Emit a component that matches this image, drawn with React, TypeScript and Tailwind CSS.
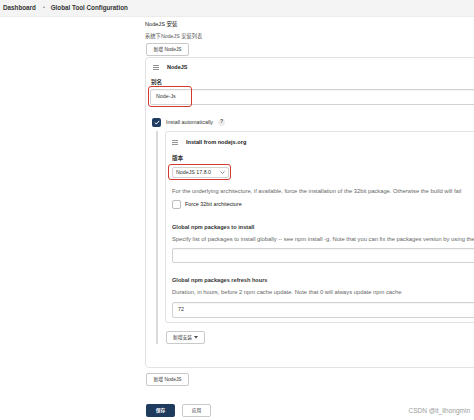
import type { ReactNode } from "react";

const font = "font-['Liberation_Sans','Noto_Sans_CJK_SC',sans-serif]";

function DragHandle() {
  return (
    <svg width="6" height="5" viewBox="0 0 6 5" className="shrink-0">
      <rect x="0" y="0" width="6" height="0.9" fill="#8a8a8a" />
      <rect x="0" y="2" width="6" height="0.9" fill="#8a8a8a" />
      <rect x="0" y="4" width="6" height="0.9" fill="#8a8a8a" />
    </svg>
  );
}

function SmallButton({ children, className = "" }: { children: ReactNode; className?: string }) {
  return (
    <div
      className={`flex h-[13px] items-center justify-center gap-[2px] rounded-[2px] border border-[#c9c9c9] bg-white text-[4.8px] text-[#333] ${className}`}
    >
      {children}
    </div>
  );
}

function Label({ children, className = "" }: { children: ReactNode; className?: string }) {
  return <div className={`h-[8px] text-[5.6px] leading-[8px] font-bold text-[#333] ${className}`}>{children}</div>;
}

function Desc({ children, className = "" }: { children: ReactNode; className?: string }) {
  return <div className={`h-[8px] whitespace-nowrap text-[5.8px] leading-[8px] text-[#666] ${className}`}>{children}</div>;
}

function TextInput({ value, className = "" }: { value?: string; className?: string }) {
  return (
    <div
      className={`flex items-center rounded-[2px] border border-[#d2d2d2] bg-white pl-[5px] text-[5.3px] text-[#333] shadow-[inset_0_1px_1px_rgba(0,0,0,0.04)] ${className}`}
    >
      {value}
    </div>
  );
}

export default function App() {
  return (
    <div className={`relative h-[420px] w-[474px] overflow-hidden bg-white ${font}`}>
      {/* breadcrumb bar */}
      <div className="flex h-[17px] items-center border-b border-[#ececec] bg-[#f4f4f4] pl-[3px] text-[6.3px] font-bold text-[#333]">
        <span>Dashboard</span>
        <span className="ml-[7px] mr-[6px] text-[5px] font-normal text-[#777]">•</span>
        <span>Global Tool Configuration</span>
      </div>

      <div className="flex w-[600px] flex-col pl-[145px] pt-[3px]">
        <div className="h-[8px] text-[5.6px] leading-[8px] text-[#222]">NodeJS 安装</div>
        <div className="mt-[4px] h-[8px] text-[5.3px] leading-[8px] text-[#555]">系统下NodeJS 安装列表</div>
        <SmallButton className="ml-[1px] mt-[3px] w-[43px]">新增 NodeJS</SmallButton>

        {/* installation card */}
        <div className="mt-[1px] flex flex-col rounded-[4px] border border-[#e2e2e2] pb-[22px] pl-[4px] pt-[4px]">
          <div className="flex h-[10px] items-center">
            <div className="ml-[3px]">
              <DragHandle />
            </div>
            <span className="ml-[8px] text-[5.5px] font-bold text-[#222]">NodeJS</span>
          </div>
          <Label className="ml-[1px] mt-[6px]">别名</Label>
          <div className="relative mt-[3px]">
            <TextInput value="Node-Js" className="h-[16px]" />
            <div className="absolute left-[-2px] top-[-3px] h-[21px] w-[44px] rounded-[3px] border-[1.5px] border-[#d33a2f]" />
          </div>

          <div className="mt-[13px] flex h-[9px] items-center">
            <div className="ml-[2px] flex h-[9px] w-[9px] items-center justify-center rounded-[2px] bg-[#1f3b5f]">
              <svg width="6" height="5" viewBox="0 0 6 5">
                <path d="M0.8 2.6 L2.3 4 L5.2 0.9" stroke="white" strokeWidth="1" fill="none" />
              </svg>
            </div>
            <span className="ml-[5px] text-[5.4px] text-[#333]">Install automatically</span>
            <span className="ml-[5px] flex h-[7px] w-[7px] items-center justify-center rounded-full bg-[#ececec] text-[4.5px] font-bold text-[#444]">
              ?
            </span>
          </div>

          {/* nested installers */}
          <div className="mt-[4px] flex pb-[1px]">
            <div className="ml-[6px] w-[2px] bg-[#d9d9d9]" />
            <div className="ml-[7px] flex flex-1 flex-col">
              <div className="flex flex-col rounded-[3px] border border-[#e2e2e2] pb-[4px] pl-[6px] pt-[5px]">
                <div className="flex h-[10px] items-center">
                  <DragHandle />
                  <span className="ml-[8px] text-[5.6px] font-bold text-[#222]">Install from nodejs.org</span>
                </div>
                <Label className="mt-[7px]">版本</Label>
                <div className="relative mt-[5px] w-[57px]">
                  <div className="flex h-[11px] items-center justify-between rounded-[2px] border border-[#d2d2d2] bg-white pl-[3px] pr-[3px] text-[5.3px] text-[#333]">
                    <span>NodeJS 17.8.0</span>
                    <svg width="5" height="3" viewBox="0 0 5 3">
                      <path d="M0.5 0.5 L2.5 2.4 L4.5 0.5" stroke="#555" strokeWidth="0.7" fill="none" />
                    </svg>
                  </div>
                  <div className="absolute left-[-4px] top-[-3px] h-[16px] w-[63px] rounded-[3px] border-[1.5px] border-[#d33a2f]" />
                </div>
                <Desc className="mt-[9px]">
                  For the underlying architecture, if available, force the installation of the 32bit package. Otherwise the build will fail
                </Desc>
                <div className="mt-[4px] flex h-[10px] items-center">
                  <div className="h-[9px] w-[9px] rounded-[2px] border border-[#bdbdbd] bg-white" />
                  <span className="ml-[4px] text-[5.4px] text-[#222]">Force 32bit architecture</span>
                </div>
                <Label className="mt-[14px]">Global npm packages to install</Label>
                <Desc className="mt-[4px]">
                  Specify list of packages to install globally -- see npm install -g. Note that you can fix the packages version by using the syntax
                </Desc>
                <TextInput className="mt-[5px] h-[15px]" />
                <Label className="mt-[13px]">Global npm packages refresh hours</Label>
                <Desc className="mt-[4px]">
                  Duration, in hours, before 2 npm cache update. Note that 0 will always update npm cache
                </Desc>
                <TextInput value="72" className="mt-[6px] h-[16px]" />
              </div>
              <SmallButton className="ml-[1px] mt-[8px] w-[39px]">
                新增安装
                <svg width="4" height="3" viewBox="0 0 4 3">
                  <path d="M0 0 L4 0 L2 2.5 Z" fill="#444" />
                </svg>
              </SmallButton>
            </div>
          </div>
        </div>

        <SmallButton className="ml-[1px] mt-[5px] w-[43px]">新增 NodeJS</SmallButton>

        <div className="ml-[1px] mt-[18px] flex gap-[7px]">
          <div className="flex h-[13px] w-[29px] items-center justify-center rounded-[2px] bg-[#1e3a5c] text-[4.8px] font-bold text-white">
            保存
          </div>
          <SmallButton className="w-[29px]">应用</SmallButton>
        </div>
      </div>

      <div className="absolute bottom-[4px] right-[4px] text-[6.5px] text-[#9a9a9a]">CSDN @it_lihongmin</div>
    </div>
  );
}
